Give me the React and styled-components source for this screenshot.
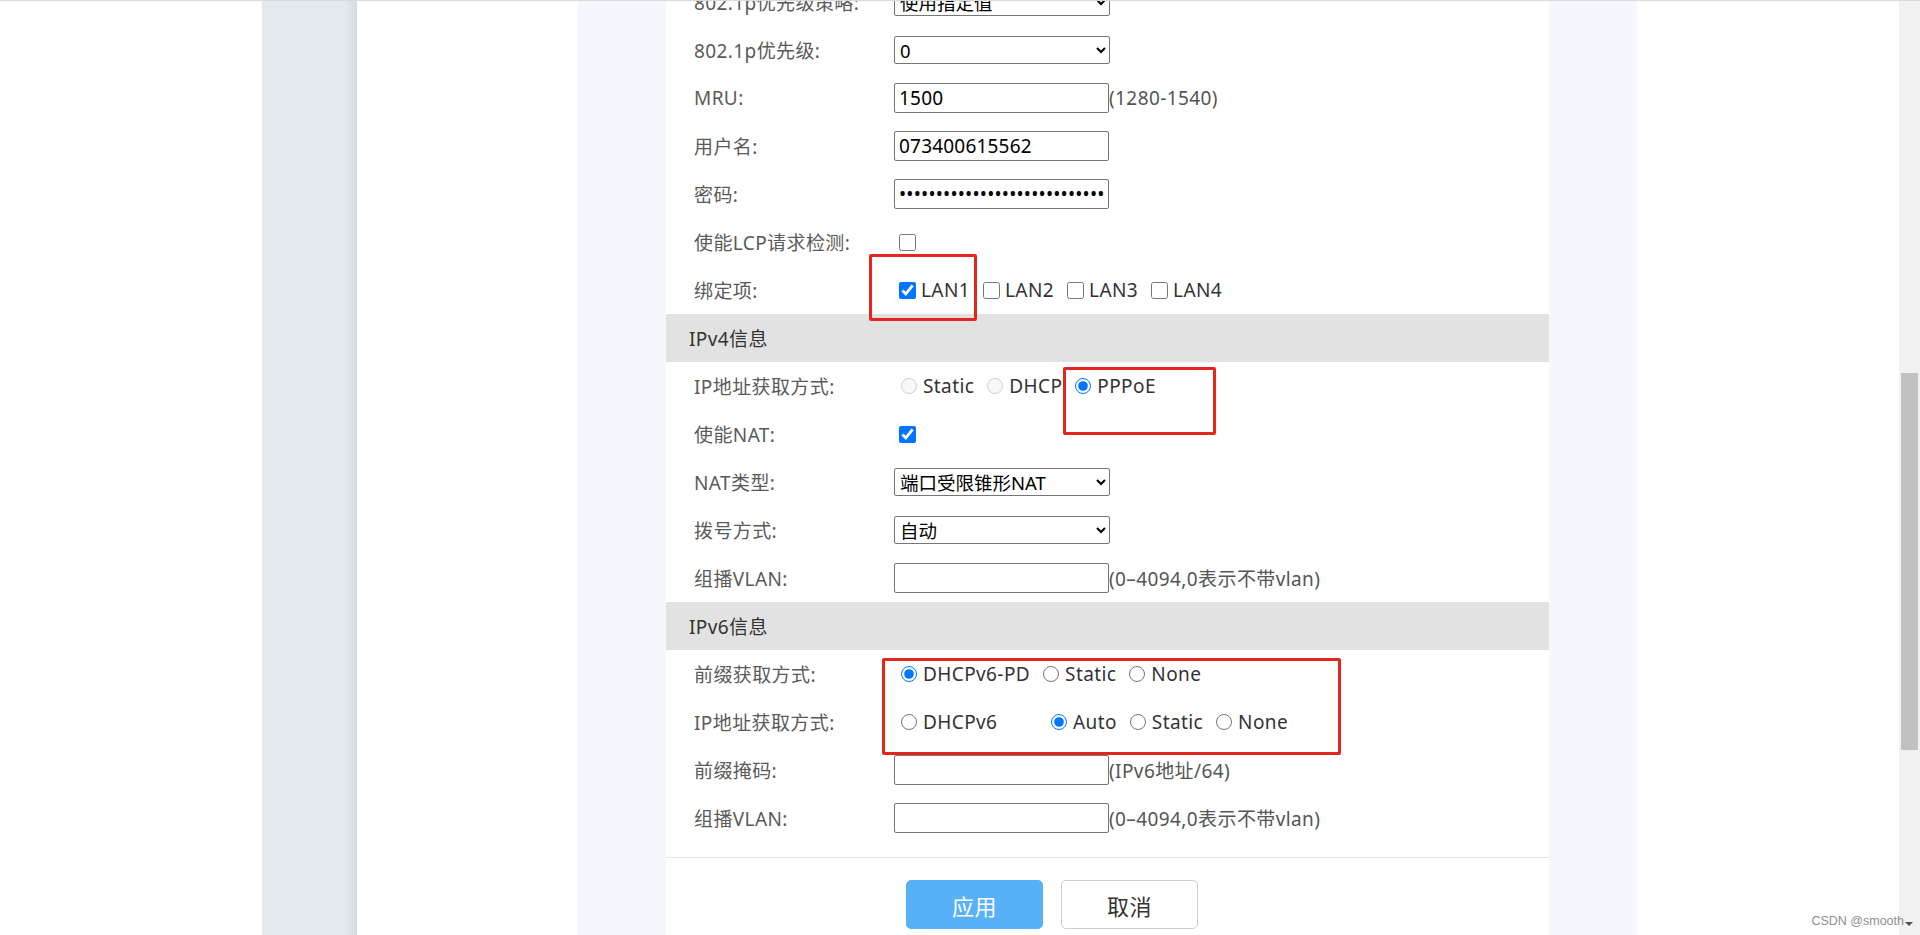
import React from 'react';
import styled, { createGlobalStyle } from 'styled-components';

const Global = createGlobalStyle`
  html, body { margin: 0; padding: 0; height: 100%; overflow: hidden; background: #fff; }
  body { font-family: "Noto Sans", "Noto Sans CJK SC", sans-serif; }
  #root { height: 100%; }
`;

const Viewport = styled.div`
  position: relative;
  display: flex;
  height: 935px;
  box-sizing: border-box;
  border-top: 1px solid #dadada;
  overflow: hidden;
`;

const Page = styled.div`
  flex: 1;
  display: flex;
  min-width: 0;
`;

const Gutter = styled.div`
  flex: 0 0 ${(p) => p.$w}px;
  background: ${(p) => p.$bg};
`;

const Sidebar = styled.div`
  flex: 0 0 95px;
  background: linear-gradient(to right, #e3e9ed 0, #e3e9ed 84px, #dde3e8 89px, #d4dadf 95px);
`;

const Filler = styled.div`
  flex: 1;
  background: #fff;
`;

const Panel = styled.div`
  position: relative;
  flex: 0 0 883px;
  background: #fff;
`;

const Form = styled.div`
  margin-top: -23px;
  letter-spacing: 0.4px;
`;

const Row = styled.div`
  display: flex;
  align-items: center;
  height: 48px;
  padding-left: 28px;
`;

const Label = styled.div`
  flex: 0 0 200px;
  font-size: 19px;
  color: #5a5a5a;
  white-space: nowrap;
`;

const Field = styled.div`
  display: flex;
  align-items: center;
  font-size: 19px;
  color: #555;
  white-space: nowrap;
`;

const TextInput = styled.input`
  width: 215px;
  height: 30px;
  box-sizing: border-box;
  border: 1px solid #767676;
  border-radius: 2px;
  padding: 0 4px;
  font-family: inherit;
  font-size: 19px;
  letter-spacing: 0.2px;
  color: #000;
  background: #fff;
  outline: none;
  margin: 0;
`;

const Select = styled.select`
  width: 216px;
  height: 28px;
  box-sizing: border-box;
  border: 1px solid #767676;
  border-radius: 2px;
  padding: 0 1px;
  font-family: inherit;
  font-size: 18.5px;
  color: #000;
  background: #fff;
  margin: 0;
  outline: none;
`;

const Options = styled.div`
  display: flex;
  align-items: center;
  gap: ${(p) => p.$gap}px;
`;

const Option = styled.label`
  display: inline-flex;
  align-items: center;
  font-size: 19px;
  color: #333;
  min-width: ${(p) => p.$minWidth || 0}px;
`;

const Check = styled.input.attrs({ type: 'checkbox' })`
  width: 17px;
  height: 17px;
  margin: 0 5px 0 5px;
`;

const Radio = styled.input.attrs({ type: 'radio' })`
  width: 16px;
  height: 16px;
  margin: 0 6px 0 7px;
`;

const SectionHeader = styled.div`
  display: flex;
  align-items: center;
  height: 48px;
  padding-left: 23px;
  background: #e2e2e2;
  font-size: 19px;
  color: #333;
`;

const Divider = styled.div`
  margin-top: 15px;
  border-top: 1px solid #e6e6e6;
`;

const ButtonBar = styled.div`
  display: flex;
  gap: 18px;
  padding: 22px 0 0 240px;
`;

const Button = styled.button`
  width: 137px;
  height: 49px;
  box-sizing: border-box;
  border-radius: 5px;
  font-family: inherit;
  font-size: 22px;
  letter-spacing: 0.5px;
  cursor: pointer;
  border: 1px solid ${(p) => (p.$primary ? '#58b0f7' : '#cfcfcf')};
  background: ${(p) => (p.$primary ? '#58b0f7' : '#fff')};
  color: ${(p) => (p.$primary ? '#fff' : '#333')};
`;

const Highlight = styled.div`
  position: absolute;
  left: ${(p) => p.$x}px;
  top: ${(p) => p.$y}px;
  width: ${(p) => p.$w}px;
  height: ${(p) => p.$h}px;
  box-sizing: border-box;
  border: 3px solid #e5261e;
  border-radius: 2px;
  pointer-events: none;
`;

const Scrollbar = styled.div`
  position: relative;
  flex: 0 0 21px;
  background: #f1f1f1;
  display: flex;
  flex-direction: column;
  align-items: flex-end;
`;

const Thumb = styled.div`
  margin-top: 372px;
  margin-right: 2px;
  width: 17px;
  height: 377px;
  background: #c1c1c1;
`;

const ArrowDown = styled.div`
  margin-top: auto;
  margin-right: 7px;
  margin-bottom: 9px;
  width: 0;
  height: 0;
  border-left: 4px solid transparent;
  border-right: 4px solid transparent;
  border-top: 4px solid #505050;
`;

const Watermark = styled.div`
  position: absolute;
  right: 16px;
  bottom: 7px;
  font-family: "Liberation Sans", "Noto Sans", sans-serif;
  font-size: 12.5px;
  color: #8f8f8f;
  pointer-events: none;
`;

const TextRow = ({ label, value, type = 'text', hint }) => (
  <Row>
    <Label>{label}</Label>
    <Field>
      <TextInput type={type} defaultValue={value} readOnly />
      {hint}
    </Field>
  </Row>
);

const SelectRow = ({ label, value }) => (
  <Row>
    <Label>{label}</Label>
    <Field>
      <Select defaultValue={value}>
        <option value={value}>{value}</option>
      </Select>
    </Field>
  </Row>
);

export default function App() {
  return (
    <>
      <Global />
      <Viewport>
        <Page>
          <Gutter $w={262} $bg="#fff" />
          <Sidebar />
          <Gutter $w={221} $bg="#fff" />
          <Gutter $w={88} $bg="#f4f7fb" />
          <Panel>
            <Form>
              <SelectRow label="802.1p优先级策略:" value="使用指定值" />
              <SelectRow label="802.1p优先级:" value="0" />
              <TextRow label="MRU:" value="1500" hint="(1280-1540)" />
              <TextRow label="用户名:" value="073400615562" />
              <TextRow label="密码:" type="password" value="abcdefghijklmnopqrstuvwxyz12" />
              <Row>
                <Label>使能LCP请求检测:</Label>
                <Field>
                  <Check />
                </Field>
              </Row>
              <Row>
                <Label>绑定项:</Label>
                <Options $gap={8}>
                  <Option><Check defaultChecked />LAN1</Option>
                  <Option><Check />LAN2</Option>
                  <Option><Check />LAN3</Option>
                  <Option><Check />LAN4</Option>
                </Options>
              </Row>

              <SectionHeader>IPv4信息</SectionHeader>
              <Row>
                <Label>IP地址获取方式:</Label>
                <Options $gap={6}>
                  <Option><Radio name="v4" disabled />Static</Option>
                  <Option><Radio name="v4" disabled />DHCP</Option>
                  <Option><Radio name="v4" defaultChecked />PPPoE</Option>
                </Options>
              </Row>
              <Row>
                <Label>使能NAT:</Label>
                <Field>
                  <Check defaultChecked />
                </Field>
              </Row>
              <SelectRow label="NAT类型:" value="端口受限锥形NAT" />
              <SelectRow label="拨号方式:" value="自动" />
              <TextRow label="组播VLAN:" value="" hint="(0–4094,0表示不带vlan)" />

              <SectionHeader>IPv6信息</SectionHeader>
              <Row>
                <Label>前缀获取方式:</Label>
                <Options $gap={6}>
                  <Option><Radio name="pd" defaultChecked />DHCPv6-PD</Option>
                  <Option><Radio name="pd" />Static</Option>
                  <Option><Radio name="pd" />None</Option>
                </Options>
              </Row>
              <Row>
                <Label>IP地址获取方式:</Label>
                <Options $gap={6}>
                  <Option $minWidth={144}><Radio name="v6" />DHCPv6</Option>
                  <Option><Radio name="v6" defaultChecked />Auto</Option>
                  <Option><Radio name="v6" />Static</Option>
                  <Option><Radio name="v6" />None</Option>
                </Options>
              </Row>
              <TextRow label="前缀掩码:" value="" hint="(IPv6地址/64)" />
              <TextRow label="组播VLAN:" value="" hint="(0–4094,0表示不带vlan)" />

              <Divider />
              <ButtonBar>
                <Button $primary>应用</Button>
                <Button>取消</Button>
              </ButtonBar>
            </Form>

            <Highlight $x={203} $y={253} $w={108} $h={67} />
            <Highlight $x={397} $y={366} $w={153} $h={68} />
            <Highlight $x={216} $y={657} $w={459} $h={97} />
          </Panel>
          <Gutter $w={88} $bg="#f4f7fb" />
          <Filler />
        </Page>
        <Scrollbar>
          <Thumb />
          <ArrowDown />
        </Scrollbar>
        <Watermark>CSDN @smooth</Watermark>
      </Viewport>
    </>
  );
}
